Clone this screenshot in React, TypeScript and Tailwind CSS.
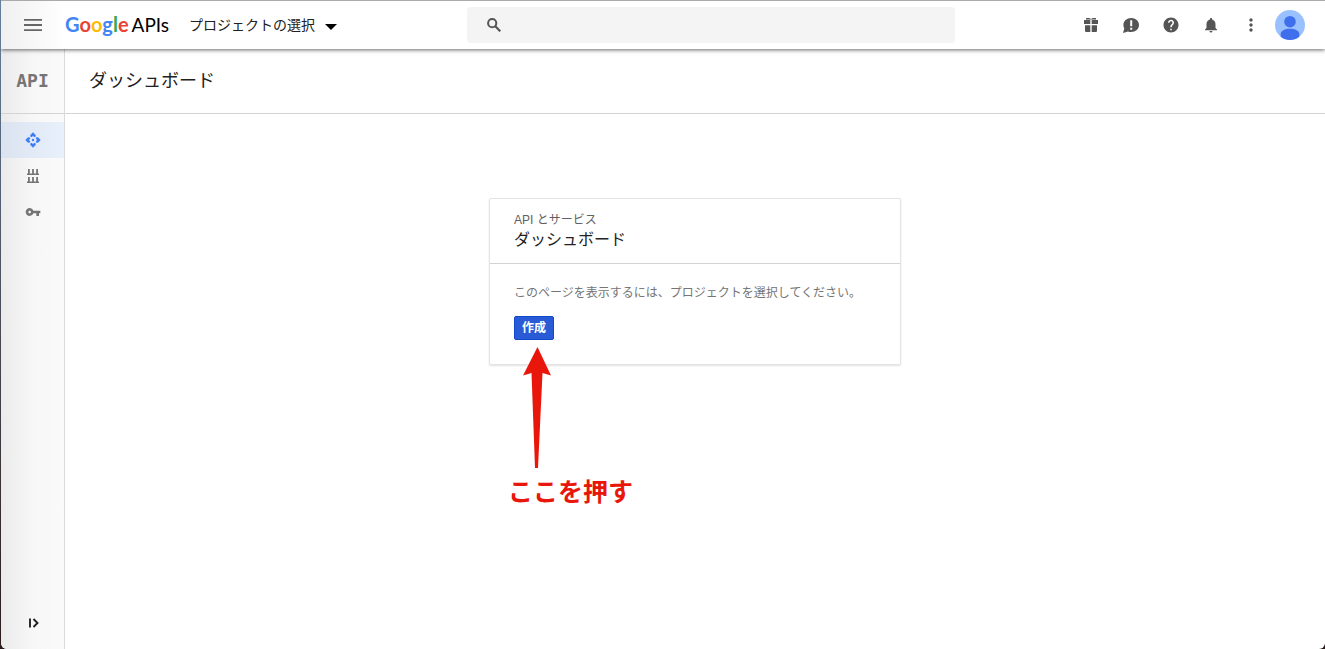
import React, { useState } from 'react';
import { MdHelp, MdMoreVert, MdNotifications, MdVpnKey } from 'react-icons/md';

const logo = [
  { char: 'G', color: 'text-[#4285f4]' },
  { char: 'o', color: 'text-[#ea4335]' },
  { char: 'o', color: 'text-[#fbbc05]' },
  { char: 'g', color: 'text-[#4285f4]' },
  { char: 'l', color: 'text-[#34a853]' },
  { char: 'e', color: 'text-[#ea4335]' },
];

const MenuIcon = () => (
  <svg width="18" height="12" viewBox="0 0 18 12" fill="currentColor" aria-hidden="true">
    <path d="M0 0h18v1.8H0zM0 5.1h18v1.8H0zM0 10.2h18V12H0z" />
  </svg>
);

const SearchIcon = () => (
  <svg width="14" height="14" viewBox="0 0 14 14" fill="none" stroke="currentColor" strokeWidth="2" className="shrink-0" aria-hidden="true">
    <circle cx="5.200" cy="5.200" r="4.100" />
    <path d="m8.300 8.300 5 5" strokeWidth="2.200" />
  </svg>
);

const GiftIcon = () => (
  <svg width="14" height="14" viewBox="0 0 14 14" fill="currentColor" aria-hidden="true">
    <path d="M2 0h3.4L7 1l1.6-1H12v1.4H2zM0 2h6.3v4H0zM7.7 2H14v4H7.7zM1 7.2h5.3V14H2a1 1 0 0 1-1-1zM7.7 7.2H13V13a1 1 0 0 1-1 1H7.7z" />
  </svg>
);

const FeedbackIcon = () => (
  <svg width="16" height="15" viewBox="0 0 16 15" aria-hidden="true">
    <path d="M8.2 0C12.6 0 16 3.1 16 7s-3.4 7-7.8 7c-1.1 0-2.2-.2-3.2-.6L0 15l1.300-4.400C.7 9.500.4 8.300.4 7 .4 3.100 3.800 0 8.200 0z" fill="currentColor" />
    <path d="M7.200 2.200h2v6h-2zM7.200 9.800h2v2h-2z" fill="#fff" />
  </svg>
);

const chevron = 'M8 .3 10.700 3v1.500L9.600 5.300 8 4 6.400 5.300 5.300 4.500V3z';

const ApiIcon = () => (
  <svg width="16" height="16" viewBox="0 0 16 16" fill="currentColor" aria-hidden="true">
    {[0, 90, 180, 270].map((deg) => (
      <path key={deg} d={chevron} transform={`rotate(${deg} 8 8)`} />
    ))}
    <circle cx="8" cy="8" r="1.200" />
  </svg>
);

const LibraryIcon = () => (
  <svg width="12" height="14" viewBox="0 0 12 14" fill="currentColor" aria-hidden="true">
    <path d="M0 4.600h12V6H0zM1 0h1.800v5H1zM5.100 0h1.800v5H5.100zM9.200 0H11v5H9.200zM0 12.600h12V14H0zM1 8h1.800v5H1zM5.100 8h1.800v5H5.100zM9.200 8H11v5H9.200z" />
  </svg>
);

const ExpandIcon = () => (
  <svg width="10" height="10" viewBox="0 0 10 10" fill="none" stroke="currentColor" strokeWidth="1.900" aria-hidden="true">
    <path d="M1 .5v9M4.500 1l4 4-4 4" />
  </svg>
);

const Avatar = () => (
  <svg width="30" height="30" viewBox="0 0 30 30" aria-hidden="true">
    <circle cx="15" cy="15" r="15" fill="#9ac1ff" />
    <circle cx="15" cy="11.700" r="5.800" fill="#3f6fec" />
    <path d="M5.700 26.700V24c0-3.200 4.100-5.200 9.300-5.200s9.300 2 9.300 5.200v2.700A15 15 0 0 1 15 30a15 15 0 0 1-9.300-3.300z" fill="#3f6fec" />
  </svg>
);

const actions = [
  { label: 'ギフト', icon: <GiftIcon /> },
  { label: 'フィードバック', icon: <FeedbackIcon /> },
  { label: 'ヘルプ', icon: <MdHelp size={18} /> },
  { label: '通知', icon: <MdNotifications size={18} /> },
  { label: 'その他', icon: <MdMoreVert size={20} /> },
];

const sideNav = [
  { label: 'ダッシュボード', icon: <ApiIcon /> },
  { label: 'ライブラリ', icon: <LibraryIcon /> },
  { label: '認証情報', icon: <MdVpnKey size={16} /> },
];

const Header = () => (
  <header className="relative z-10 flex h-[49px] shrink-0 items-center border-t border-[#aaaaaa] bg-gradient-to-r from-[#f0f0f0] to-white to-[64px] pr-5 shadow-[0_1px_4px_rgba(0,0,0,0.6)]">
    <div className="flex w-[466px] shrink-0 items-center">
      <button aria-label="メニュー" className="flex h-10 w-16 items-center justify-center text-[#666666]">
        <MenuIcon />
      </button>
      <a href="#" className="flex items-baseline gap-[3px] pb-px whitespace-nowrap font-[Lato,sans-serif] text-[20px] leading-6">
        <span className="font-bold">
          {logo.map((l, i) => (
            <span key={i} className={l.color}>{l.char}</span>
          ))}
        </span>
        <span className="text-[19px] text-black">APIs</span>
      </a>
      <button className="ml-5 flex items-center gap-[10px] whitespace-nowrap text-sm text-[#212121]">
        プロジェクトの選択
        <svg width="12" height="6" viewBox="0 0 12 6" className="mt-1" aria-hidden="true">
          <path d="M0 0h12L6 6z" fill="#000" />
        </svg>
      </button>
    </div>
    <label className="flex h-9 min-w-0 flex-1 items-center gap-4 rounded-sm bg-[#f4f4f4] px-5 text-[#555555]">
      <SearchIcon />
      <input type="text" aria-label="検索" className="min-w-0 flex-1 bg-transparent text-sm outline-none" />
    </label>
    <div className="ml-[116px] flex items-center text-[#555555]">
      {actions.map((a) => (
        <button key={a.label} aria-label={a.label} className="flex h-10 w-10 items-center justify-center">
          {a.icon}
        </button>
      ))}
      <button aria-label="アカウント" className="ml-1">
        <Avatar />
      </button>
    </div>
  </header>
);

const Sidebar = ({ active, onSelect }: { active: number; onSelect: (i: number) => void }) => (
  <aside className="flex w-16 shrink-0 flex-col border-r border-[#dadada] bg-gradient-to-r from-[#ebebeb] via-[#f7f7f7] to-[#fafafa]">
    <div className="flex h-[65px] items-center justify-center border-b border-[#d3d3d3] font-['DejaVu_Sans_Mono',monospace] text-lg font-bold text-[#757575]">
      API
    </div>
    <nav className="mt-2 flex flex-col">
      {sideNav.map((item, i) => (
        <button
          key={item.label}
          aria-label={item.label}
          onClick={() => onSelect(i)}
          className={`flex h-9 items-center justify-center ${
            i === active ? 'bg-gradient-to-r from-[#dbe3f0] to-[#e8f0fc] text-[#3f7df6]' : 'text-[#757575]'
          }`}
        >
          {item.icon}
        </button>
      ))}
    </nav>
    <button aria-label="メニューを展開" className="mt-auto mb-2 flex h-9 items-center justify-center pl-0.5 text-[#212121]">
      <ExpandIcon />
    </button>
  </aside>
);

// Red arrow and caption laid over the card, pointing at the create button
const Callout = () => (
  <div className="pointer-events-none absolute top-[148px] left-[18px] text-[#e9170b]">
    <svg width="28" height="121" viewBox="0 0 28 121" className="ml-[15px]" fill="currentColor" aria-hidden="true">
      <path d="M14.500 0 28 28.500l-8.500-2.500L15 121h-3L8.500 26 0 28.500z" />
    </svg>
    <p className="mt-2 whitespace-nowrap text-[25px] leading-8 font-bold">ここを押す</p>
  </div>
);

const ProjectCard = () => (
  <section className="relative w-[412px] max-w-full rounded-xs border border-[#e4e4e4] bg-white shadow-[0_1px_2px_rgba(0,0,0,0.12)]">
    <div className="border-b border-[#d3d3d3] px-6 pt-[13px] pb-[11px]">
      <p className="text-xs leading-4 text-[#616161]">API とサービス</p>
      <h2 className="text-base leading-6 text-[#212121]">ダッシュボード</h2>
    </div>
    <div className="px-6 pt-[21px] pb-6">
      <p className="text-xs leading-4 text-[#757575]">このページを表示するには、プロジェクトを選択してください。</p>
      <button className="mt-[15px] flex h-6 w-10 items-center justify-center rounded-xs border border-[#0f48c9] bg-[#2a5bd7] text-xs font-bold text-white">
        作成
      </button>
    </div>
    <Callout />
  </section>
);

export default function App() {
  const [active, setActive] = useState(0);

  return (
    <div className="flex min-h-screen flex-col bg-gradient-to-b from-[#64809c] to-[#2b1b1b] pl-px font-['Liberation_Sans','Noto_Sans_CJK_JP',sans-serif]">
      <div className="flex flex-1 flex-col overflow-hidden rounded-b-md bg-white">
        <Header />
        <div className="flex flex-1">
          <Sidebar active={active} onSelect={setActive} />
          <main className="min-w-0 flex-1">
            <div className="flex h-[65px] items-center border-b border-[#d3d3d3] px-6">
              <h1 className="text-lg text-[#212121]">ダッシュボード</h1>
            </div>
            <div className="flex justify-center pt-[84px] pb-40">
              <ProjectCard />
            </div>
          </main>
        </div>
      </div>
    </div>
  );
}
